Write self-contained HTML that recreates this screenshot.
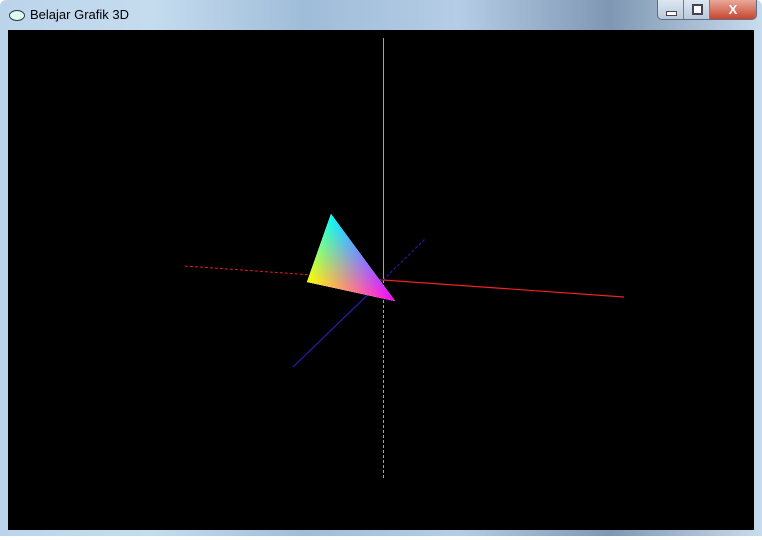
<!DOCTYPE html>
<html><head><style>
html,body{margin:0;padding:0;width:762px;height:540px;overflow:hidden;background:#fff}
.frame{position:absolute;left:0;top:0;width:762px;height:536px;background:linear-gradient(90deg,#bcd4ea 0%,#c5dcef 20%,#9fbcd8 40%,#b5cde6 60%,#7f97b2 80%,#c9dcef 100%);border-radius:6px 6px 0 0}
.title{position:absolute;left:30px;top:7px;font:13px "Liberation Sans",sans-serif;color:#000}
.ico{position:absolute;left:9px;top:10px;width:14px;height:9px;border:1px solid #335;border-radius:50%;background:#dfe}
.btns{position:absolute;left:657px;top:0;width:98px;height:19px;border:1px solid #5b6f86;border-top:none;border-radius:0 0 5px 5px;background:linear-gradient(#dde7f2,#b9c9da);overflow:hidden}
.b{position:absolute;top:0;height:19px;border-right:1px solid #6b7f96}
.x{position:absolute;left:52px;top:0;width:46px;height:19px;background:linear-gradient(#e9a99c,#c7452f);color:#fff;font:bold 13px "Liberation Sans",sans-serif;text-align:center;line-height:19px}
</style></head><body>
<div class="frame"></div>
<div class="ico"></div>
<div class="title">Belajar Grafik 3D</div>
<div class="btns"><div class="b" style="left:0;width:25px"><div style="position:absolute;left:8px;top:11px;width:9px;height:3px;background:#fff;border:1px solid #445"></div></div><div class="b" style="left:26px;width:25px"><div style="position:absolute;left:8px;top:4px;width:7px;height:7px;border:2px solid #445;background:#fff"></div></div><div class="x">X</div></div>
<svg style="position:absolute;left:0;top:0" width="762" height="540">
<rect x="8" y="30" width="746" height="500" fill="#000"/>
<defs>
<linearGradient id="ga" gradientUnits="userSpaceOnUse" x1="331" y1="214" x2="315.9" y2="283.9"><stop offset="0" stop-color="#0ff"/><stop offset="1" stop-color="#fff"/></linearGradient>
<linearGradient id="gb" gradientUnits="userSpaceOnUse" x1="307" y1="282" x2="355" y2="246.6"><stop offset="0" stop-color="#ff0"/><stop offset="1" stop-color="#fff"/></linearGradient>
<linearGradient id="gc" gradientUnits="userSpaceOnUse" x1="395" y1="301" x2="310.8" y2="271.3"><stop offset="0" stop-color="#f0f"/><stop offset="1" stop-color="#fff"/></linearGradient>
</defs>
<rect x="383" y="38" width="1" height="242" fill="rgb(80,220,80)"/>
<line x1="383.5" y1="280" x2="383.5" y2="478" stroke="rgb(80,220,80)" stroke-width="1" stroke-dasharray="3,2"/>
<line x1="185" y1="266" x2="383" y2="280" stroke="#d22" stroke-width="1" stroke-dasharray="3,2"/>
<line x1="383" y1="280" x2="624" y2="297" stroke="#e22" stroke-width="1.2"/>
<line x1="383" y1="280" x2="426" y2="238" stroke="#22b" stroke-width="1" stroke-dasharray="3,2"/>
<line x1="383" y1="280" x2="293" y2="367" stroke="#22b" stroke-width="1.2"/>
<g style="isolation:isolate">
<polygon points="331,214 307,282 395,301" fill="#fff"/>
<polygon points="331,214 307,282 395,301" fill="url(#ga)" style="mix-blend-mode:multiply"/>
<polygon points="331,214 307,282 395,301" fill="url(#gb)" style="mix-blend-mode:multiply"/>
<polygon points="331,214 307,282 395,301" fill="url(#gc)" style="mix-blend-mode:multiply"/>
</g>
</svg>
</body></html>
